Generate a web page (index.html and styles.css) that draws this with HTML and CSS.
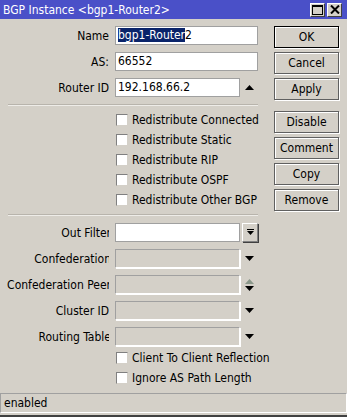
FILE: index.html
```html
<!DOCTYPE html>
<html lang="en">
<head>
    <meta charset="UTF-8">
    <title>BGP Instance &lt;bgp1-Router2&gt;</title>
    <link rel="stylesheet" href="styles.css">
</head>
<body>
    <div class="window">
        <header class="titlebar">
            <span class="title">BGP Instance &lt;bgp1-Router2&gt;</span>
            <div class="title-buttons">
                <span class="title-button">
                    <svg width="11" height="10" viewBox="0 0 11 10"><rect x="0.5" y="0.5" width="10" height="9" fill="none" stroke="#000"/><rect x="0" y="0" width="11" height="2" fill="#000"/></svg>
                </span>
                <span class="title-button">
                    <svg width="10" height="9" viewBox="0 0 10 9"><path d="M1 0.5 L9 8.5 M9 0.5 L1 8.5" stroke="#000" stroke-width="2"/></svg>
                </span>
            </div>
        </header>

        <div class="main">
            <div class="form">
                <div class="fields">
                    <div class="row">
                        <div class="label"><span>Name</span></div>
                        <div class="field wide"><span class="selected">bgp1-Router</span>2</div>
                    </div>
                    <div class="row">
                        <div class="label"><span>AS:</span></div>
                        <div class="field wide">66552</div>
                    </div>
                    <div class="row">
                        <div class="label"><span>Router ID</span></div>
                        <div class="field">192.168.66.2</div>
                        <span class="arrow">
                            <svg width="9" height="5" viewBox="0 0 9 5"><polygon points="0,5 9,5 4.5,0" fill="#000"/></svg>
                        </span>
                    </div>
                </div>

                <div class="separator"></div>

                <div class="checks">
                    <label class="check"><span class="box"></span>Redistribute Connected</label>
                    <label class="check"><span class="box"></span>Redistribute Static</label>
                    <label class="check"><span class="box"></span>Redistribute RIP</label>
                    <label class="check"><span class="box"></span>Redistribute OSPF</label>
                    <label class="check"><span class="box"></span>Redistribute Other BGP</label>
                </div>

                <div class="separator lower"></div>

                <div class="fields second">
                    <div class="row">
                        <div class="label"><span class="clip">Out Filter</span></div>
                        <div class="field"></div>
                        <span class="drop-button">
                            <svg width="7" height="7" viewBox="0 0 7 7"><rect x="0" y="0" width="7" height="1" fill="#000"/><polygon points="0,2 7,2 3.5,6" fill="#000"/></svg>
                        </span>
                    </div>
                    <div class="row">
                        <div class="label"><span class="clip">Confederation</span></div>
                        <div class="field disabled"></div>
                        <span class="arrow">
                            <svg width="9" height="5" viewBox="0 0 9 5"><polygon points="0,0 9,0 4.5,5" fill="#000"/></svg>
                        </span>
                    </div>
                    <div class="row">
                        <div class="label"><span class="clip">Confederation Peer</span></div>
                        <div class="field disabled"></div>
                        <span class="arrow">
                            <svg width="9" height="12" viewBox="0 0 9 12"><polygon points="0,5 9,5 4.5,0" fill="#8a978a"/><polygon points="0,7 9,7 4.5,12" fill="#000"/></svg>
                        </span>
                    </div>
                    <div class="row">
                        <div class="label"><span>Cluster ID</span></div>
                        <div class="field disabled"></div>
                        <span class="arrow">
                            <svg width="9" height="5" viewBox="0 0 9 5"><polygon points="0,0 9,0 4.5,5" fill="#000"/></svg>
                        </span>
                    </div>
                    <div class="row">
                        <div class="label"><span class="clip">Routing Table</span></div>
                        <div class="field disabled"></div>
                        <span class="arrow">
                            <svg width="9" height="5" viewBox="0 0 9 5"><polygon points="0,0 9,0 4.5,5" fill="#000"/></svg>
                        </span>
                    </div>
                </div>

                <div class="checks last">
                    <label class="check"><span class="box"></span>Client To Client Reflection</label>
                    <label class="check"><span class="box"></span>Ignore AS Path Length</label>
                </div>
            </div>

            <div class="side">
                <button class="button default">OK</button>
                <button class="button">Cancel</button>
                <button class="button">Apply</button>
                <button class="button spaced">Disable</button>
                <button class="button">Comment</button>
                <button class="button">Copy</button>
                <button class="button">Remove</button>
            </div>
        </div>

        <footer class="status">enabled</footer>
    </div>
</body>
</html>
```

FILE: styles.css
```css
* {
    margin: 0;
    padding: 0;
    box-sizing: border-box;
}

body {
    font-family: "DejaVu Sans Condensed", "DejaVu Sans", sans-serif;
    font-stretch: condensed;
    font-size: 12px;
    color: #000;
    background-color: #d4d0c8;
}

.window {
    width: 347px;
    height: 417px;
    display: flex;
    flex-direction: column;
    background-color: #d4d0c8;
    border-bottom: 2px solid #404040;
}

/* Title bar */
.titlebar {
    height: 20px;
    display: flex;
    align-items: center;
    justify-content: space-between;
    padding: 0 5px 0 3px;
    background-color: #4a50c8;
    color: #fff;
    border-bottom: 1px solid #d4d0c8;
}

.title-buttons {
    display: flex;
    gap: 2px;
}

.title-button {
    width: 15px;
    height: 14px;
    display: flex;
    align-items: center;
    justify-content: center;
    background-color: #d4d0c8;
    border: 1px solid;
    border-color: #fff #404040 #404040 #fff;
}

/* Main area */
.main {
    display: flex;
    padding-top: 6px;
}

.form {
    width: 258px;
    display: flex;
    flex-direction: column;
}

.fields {
    display: flex;
    flex-direction: column;
    gap: 7px;
}

.fields.second {
    margin-top: 7px;
}

.row {
    height: 19px;
    display: flex;
    align-items: center;
}

.label {
    width: 109px;
    margin-right: 6px;
    display: flex;
    justify-content: safe flex-end;
    overflow: hidden;
    white-space: nowrap;
}

.label .clip {
    margin-right: -2px;
}

.field {
    width: 125px;
    height: 19px;
    padding: 0 2px;
    line-height: 17px;
    background-color: #fff;
    border: 1px solid #a0a0a0;
    white-space: nowrap;
    overflow: hidden;
}

.field.wide {
    width: 143px;
}

.field.disabled {
    background-color: #d4d0c8;
    border-color: #a0a0a0 #fff #fff #a0a0a0;
    box-shadow: 1px 1px 0 #fff;
}

.selected {
    background-color: #0a246a;
    color: #fff;
}

.arrow {
    width: 18px;
    display: flex;
    align-items: center;
    justify-content: center;
}

.drop-button {
    width: 16px;
    height: 19px;
    margin-left: 2px;
    display: flex;
    align-items: center;
    justify-content: center;
    border: 1px solid;
    border-color: #fff #808080 #808080 #fff;
    box-shadow: 1px 1px 0 #404040;
}

.separator {
    height: 2px;
    margin: 7px 0 0 8px;
    border-top: 1px solid #b8b4ac;
    border-bottom: 1px solid #eeece8;
}

.separator.lower {
    margin-top: 4px;
}

/* Checkboxes */
.checks {
    margin-top: 4px;
    padding-left: 116px;
    display: flex;
    flex-direction: column;
}

.checks.last {
    margin-top: 2px;
}

.check {
    height: 20px;
    display: flex;
    align-items: center;
    gap: 4px;
    white-space: nowrap;
}

.box {
    flex-shrink: 0;
    width: 12px;
    height: 12px;
    background-color: #fff;
    border: 1px solid;
    border-color: #808080 #d4d0c8 #d4d0c8 #808080;
}

/* Side buttons */
.side {
    margin-left: 16px;
    display: flex;
    flex-direction: column;
    gap: 4px;
}

.button {
    width: 65px;
    height: 22px;
    font-family: inherit;
    font-size: 12px;
    color: #000;
    background-color: #d4d0c8;
    border: 1px solid #606060;
    box-shadow: inset 1px 1px 0 #fff, 1px 1px 0 #fff;
}

.button.default {
    border-color: #000;
}

.button.spaced {
    margin-top: 7px;
}

/* Status bar */
.status {
    height: 20px;
    margin-top: 5px;
    padding-left: 3px;
    line-height: 18px;
    border: 1px solid;
    border-color: #a0a0a0 #fff #fff #a0a0a0;
}
```
